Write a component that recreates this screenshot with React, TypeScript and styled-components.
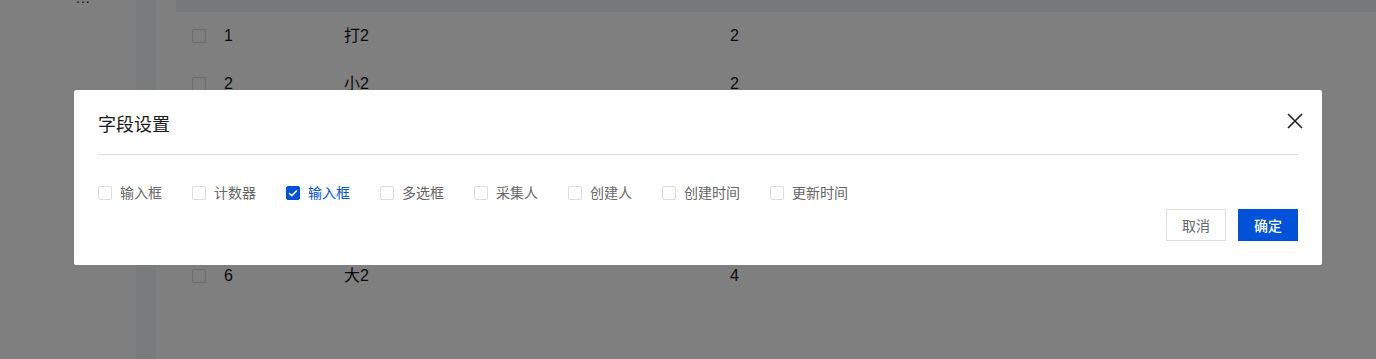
import React, { useState } from 'react';
import styled, { createGlobalStyle } from 'styled-components';

const GlobalStyle = createGlobalStyle`
  html, body {
    margin: 0;
    padding: 0;
    overflow: hidden;
  }
  body {
    font-family: "Liberation Sans", "Noto Sans CJK SC", sans-serif;
    background: #fff;
  }
  * {
    box-sizing: border-box;
  }
`;

type Row = { id: number; name: string; value: number };

const rows: Row[] = [
  { id: 1, name: '打2', value: 2 },
  { id: 2, name: '小2', value: 2 },
  { id: 3, name: '中2', value: 3 },
  { id: 4, name: '多2', value: 3 },
  { id: 5, name: '少2', value: 4 },
  { id: 6, name: '大2', value: 4 },
];

const fields = ['输入框', '计数器', '输入框', '多选框', '采集人', '创建人', '创建时间', '更新时间'];

export default function App() {
  const [checked, setChecked] = useState<number[]>([2]);

  const toggle = (index: number) =>
    setChecked((prev) =>
      prev.includes(index) ? prev.filter((i) => i !== index) : [...prev, index]
    );

  return (
    <>
      <GlobalStyle />
      <Page>
        <Sidebar>
          <SideItem>...</SideItem>
        </Sidebar>
        <Gutter />
        <Content>
          <TableHead />
          {rows.map((row) => (
            <TableRow key={row.id}>
              <RowBox />
              <Cell>{row.id}</Cell>
              <Cell>{row.name}</Cell>
              <Cell>{row.value}</Cell>
            </TableRow>
          ))}
        </Content>
      </Page>

      <Overlay />

      <Dialog>
        <DialogHeader>
          <Title>字段设置</Title>
          <CloseButton aria-label="close">
            <svg width="20" height="20" viewBox="0 0 20 20" fill="none">
              <path d="M3 3L17 17M17 3L3 17" stroke="#1f2329" strokeWidth="1.6" />
            </svg>
          </CloseButton>
        </DialogHeader>

        <FieldList>
          {fields.map((label, index) => {
            const on = checked.includes(index);
            return (
              <FieldOption key={index} $checked={on} onClick={() => toggle(index)}>
                <Box $checked={on}>
                  {on && (
                    <svg width="10" height="8" viewBox="0 0 10 8" fill="none">
                      <path d="M1.2 4.2L3.8 6.6L8.8 1.4" stroke="#fff" strokeWidth="1.5" />
                    </svg>
                  )}
                </Box>
                {label}
              </FieldOption>
            );
          })}
        </FieldList>

        <Footer>
          <Button>取消</Button>
          <Button $primary>确定</Button>
        </Footer>
      </Dialog>
    </>
  );
}

const Page = styled.div`
  display: flex;
  height: 359px;
`;

const Sidebar = styled.aside`
  width: 136px;
  flex-shrink: 0;
  background: #fff;
`;

const SideItem = styled.div`
  margin-top: -12px;
  padding-left: 76px;
  font-size: 14px;
  line-height: 20px;
  letter-spacing: 1px;
  color: #1a1a1a;
`;

const Gutter = styled.div`
  width: 20px;
  flex-shrink: 0;
  background: #f5f7fb;
`;

const Content = styled.main`
  flex: 1;
  background: #fff;
  padding: 0 0 0 20px;
`;

const TableHead = styled.div`
  height: 12px;
  background: #eef0f4;
`;

const TableRow = styled.div`
  display: grid;
  grid-template-columns: 32px 120px 386px 1fr;
  align-items: center;
  height: 48px;
  padding-left: 16px;
  font-size: 16px;
  color: #141414;
`;

const RowBox = styled.span`
  width: 14px;
  height: 14px;
  border: 1px solid #dcdcdc;
  border-radius: 2px;
  background: #fff;
`;

const Cell = styled.span`
  line-height: 22px;
`;

const Overlay = styled.div`
  position: fixed;
  inset: 0;
  background: rgba(0, 0, 0, 0.5);
`;

const Dialog = styled.section`
  position: fixed;
  left: 74px;
  top: 90px;
  width: 1248px;
  background: #fff;
  border-radius: 2px;
  padding: 24px;
  font-family: "Liberation Sans", "Noto Sans CJK SC", sans-serif;
`;

const DialogHeader = styled.header`
  display: flex;
  align-items: center;
  justify-content: space-between;
  padding-bottom: 18px;
  border-bottom: 1px solid #dcdcdc;
`;

const Title = styled.h2`
  margin: 0;
  font-size: 18px;
  line-height: 22px;
  font-weight: 400;
  color: #1a1a1a;
`;

const CloseButton = styled.button`
  display: flex;
  padding: 0;
  margin: -9px -7px 0 0;
  border: none;
  background: none;
  cursor: pointer;
`;

const FieldList = styled.div`
  display: flex;
  gap: 30px;
  margin-top: 27px;
`;

const FieldOption = styled.label<{ $checked: boolean }>`
  display: flex;
  align-items: center;
  gap: 8px;
  font-size: 14px;
  line-height: 22px;
  color: ${(p) => (p.$checked ? '#0052d9' : '#666')};
  cursor: pointer;
`;

const Box = styled.span<{ $checked: boolean }>`
  display: flex;
  align-items: center;
  justify-content: center;
  width: 14px;
  height: 14px;
  border-radius: 2px;
  border: 1px solid ${(p) => (p.$checked ? '#0052d9' : '#dcdcdc')};
  background: ${(p) => (p.$checked ? '#0052d9' : '#fff')};
`;

const Footer = styled.footer`
  display: flex;
  justify-content: flex-end;
  gap: 12px;
  margin-top: 5px;
`;

const Button = styled.button<{ $primary?: boolean }>`
  width: 60px;
  height: 32px;
  padding: 0;
  font-family: inherit;
  font-size: 14px;
  font-weight: ${(p) => (p.$primary ? 500 : 400)};
  border-radius: 0;
  border: 1px solid ${(p) => (p.$primary ? '#0052d9' : '#dcdcdc')};
  background: ${(p) => (p.$primary ? '#0052d9' : '#fff')};
  color: ${(p) => (p.$primary ? '#fff' : '#666')};
  cursor: pointer;
`;
